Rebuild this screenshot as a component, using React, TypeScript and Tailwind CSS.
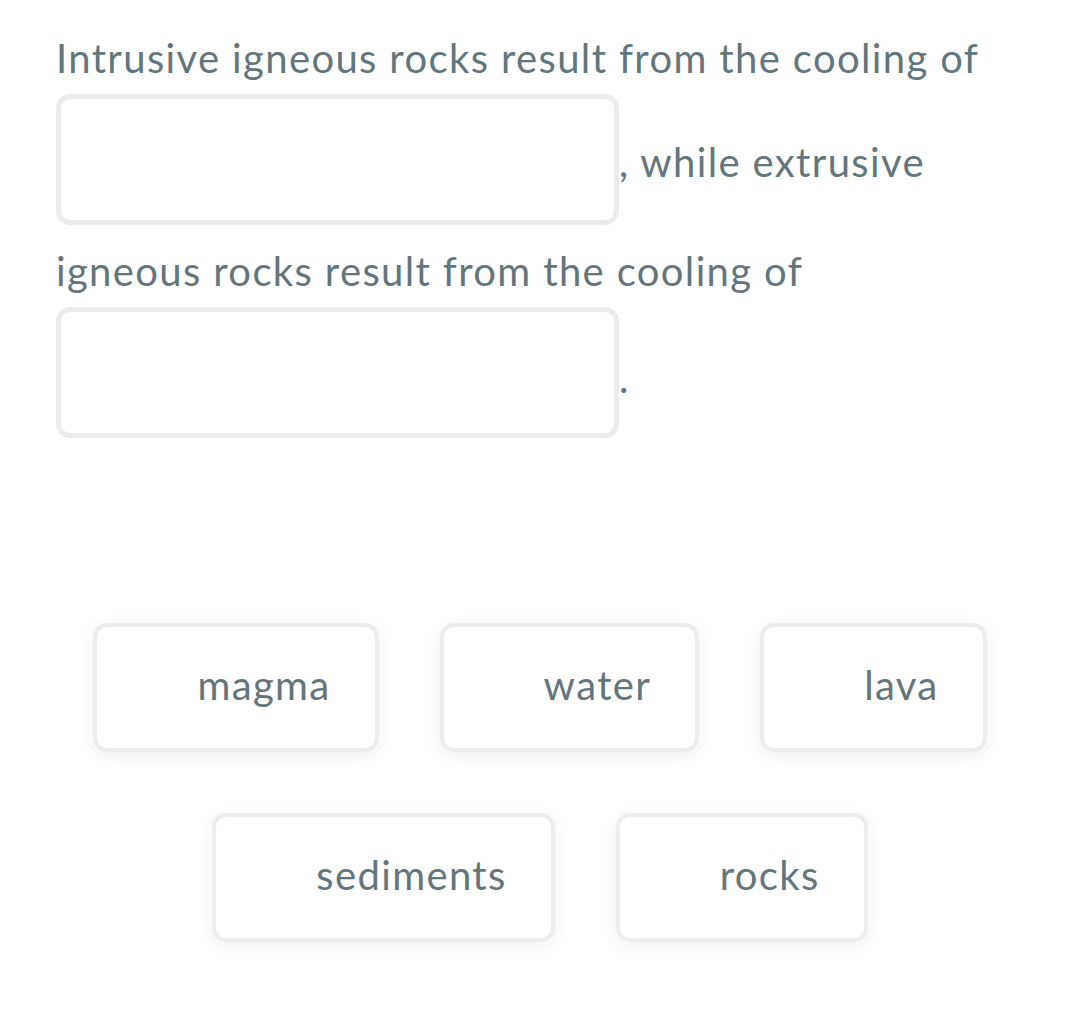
import { useState } from 'react'

type Choice = { id: string; label: string }

const choices: Choice[] = [
  { id: 'magma', label: 'magma' },
  { id: 'water', label: 'water' },
  { id: 'lava', label: 'lava' },
  { id: 'sediments', label: 'sediments' },
  { id: 'rocks', label: 'rocks' },
]

function Blank({ value }: { value: string | null }) {
  return (
    <div className="w-[563px] h-[131px] shrink-0 rounded-[14px] border-[5px] border-[#ececec] bg-white flex items-center justify-center">
      {value}
    </div>
  )
}

export default function App() {
  const [blanks] = useState<(string | null)[]>([null, null])

  return (
    <div
      className="min-h-screen bg-white text-[#62767c] text-[40px] leading-[52px] tracking-[0.034em]"
      style={{ fontFamily: "Lato, 'Open Sans', sans-serif" }}
    >
      {/* sentence with blanks */}
      <div className="pl-[56px] pt-[32px]">
        <p>Intrusive igneous rocks result from the cooling of</p>
        <div className="flex items-center mt-[10px]">
          <Blank value={blanks[0]} />
          <span className="pt-1">, while extrusive</span>
        </div>
        <p className="mt-[20px]">igneous rocks result from the cooling of</p>
        <div className="flex items-center mt-[10px]">
          <Blank value={blanks[1]} />
          <span className="pt-[10px]">.</span>
        </div>
      </div>

      {/* word bank */}
      <div className="mt-[185px] flex flex-wrap justify-center gap-x-[61px] gap-y-[61px]">
        {choices.map((c) => (
          <button
            key={c.id}
            className="h-[129px] rounded-[14px] border-4 border-[#ededed] bg-white pl-[100px] pr-[44px] pb-[6px] flex items-center tracking-[0.034em] shadow-[0_4px_18px_rgba(0,0,0,0.06)]"
          >
            {c.label}
          </button>
        ))}
      </div>
    </div>
  )
}
